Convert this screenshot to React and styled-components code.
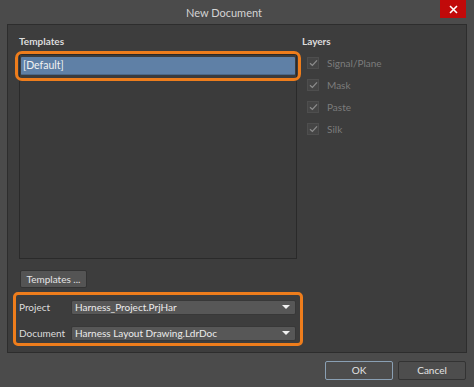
import React from "react";
import styled, { createGlobalStyle } from "styled-components";

const GlobalStyle = createGlobalStyle`
  html, body {
    margin: 0;
    padding: 0;
    background: #4b4b4b;
  }
  body {
    font-family: "Lato", "Noto Sans", sans-serif;
  }
`;

const layers = ["Signal/Plane", "Mask", "Paste", "Silk"];

const App = () => {
  return (
    <Dialog>
      <GlobalStyle />
      <TitleBar>
        <Title>New Document</Title>
        <CloseButton aria-label="Close">
          <svg width="9" height="9" viewBox="0 0 9 9">
            <path d="M1 1L8 8M8 1L1 8" stroke="#fff" strokeWidth="1.6" />
          </svg>
        </CloseButton>
      </TitleBar>

      <Panel>
        <LeftColumn>
          <SectionLabel>Templates</SectionLabel>
          <TemplateList>
            <ListItem $selected>[Default]</ListItem>
          </TemplateList>
          <PlainButton>Templates ...</PlainButton>
          <Highlight>
            <FieldRow>
              <FieldLabel>Project</FieldLabel>
              <Select>
                <span>Harness_Project.PrjHar</span>
                <Caret />
              </Select>
            </FieldRow>
            <FieldRow>
              <FieldLabel>Document</FieldLabel>
              <Select>
                <span>Harness Layout Drawing.LdrDoc</span>
                <Caret />
              </Select>
            </FieldRow>
          </Highlight>
        </LeftColumn>

        <RightColumn>
          <SectionLabel>Layers</SectionLabel>
          <LayerList>
            {layers.map((name) => (
              <LayerRow key={name}>
                <CheckBox>
                  <svg width="9" height="8" viewBox="0 0 9 8">
                    <path
                      d="M1 4.2L3.4 6.4L8 1.4"
                      fill="none"
                      stroke="#8c8c8c"
                      strokeWidth="1.3"
                    />
                  </svg>
                </CheckBox>
                <LayerName>{name}</LayerName>
              </LayerRow>
            ))}
          </LayerList>
        </RightColumn>
      </Panel>

      <Footer>
        <DialogButton $primary>OK</DialogButton>
        <DialogButton>Cancel</DialogButton>
      </Footer>
    </Dialog>
  );
};

export default App;

const Dialog = styled.div`
  width: 474px;
  height: 387px;
  background: #4b4b4b;
  display: flex;
  flex-direction: column;
  overflow: hidden;
`;

const TitleBar = styled.div`
  height: 24px;
  display: flex;
  align-items: flex-start;
  padding-left: 8px;
  padding-right: 8px;
`;

const Title = styled.div`
  flex: 1;
  text-align: center;
  color: #d4d4d4;
  font-size: 11px;
  line-height: 25px;
`;

const CloseButton = styled.div`
  width: 26px;
  height: 18px;
  background: #c10a0a;
  display: flex;
  align-items: center;
  justify-content: center;
`;

const Panel = styled.div`
  margin: 0 7px;
  height: 329px;
  box-sizing: border-box;
  border: 1px solid #2d2d2d;
  background: #3d3d3d;
  display: flex;
  padding: 10px 0 0 11px;
`;

const LeftColumn = styled.div`
  width: 278px;
  display: flex;
  flex-direction: column;
  align-items: flex-start;
`;

const RightColumn = styled.div`
  margin-left: 5px;
  display: flex;
  flex-direction: column;
`;

const SectionLabel = styled.div`
  color: #dcdcdc;
  font-size: 10px;
  font-weight: 700;
  height: 19px;
  line-height: 12px;
`;

const TemplateList = styled.div`
  width: 278px;
  height: 205px;
  box-sizing: border-box;
  border: 1px solid #2a2a2a;
  background: #3b3b3b;
  padding: 2px 1px;
`;

const ListItem = styled.div`
  height: 18px;
  box-sizing: border-box;
  padding-left: 2px;
  font-size: 10.5px;
  line-height: 17px;
  color: #f2f2f2;
  background: ${(p) => (p.$selected ? "#5f80a6" : "transparent")};
  border-bottom: 1px solid ${(p) => (p.$selected ? "#4d6887" : "transparent")};
  outline: ${(p) => (p.$selected ? "3px solid #ee7d1c" : "none")};
  outline-offset: 3px;
  border-radius: 1px;
`;

const PlainButton = styled.div`
  margin-top: 11px;
  margin-left: 1px;
  width: 67px;
  height: 18px;
  box-sizing: border-box;
  border: 1px solid #333;
  border-radius: 2px;
  background: #545454;
  color: #e4e4e4;
  font-size: 10px;
  line-height: 16px;
  text-align: center;
`;

const Highlight = styled.div`
  margin-top: 4px;
  margin-left: -6px;
  width: 290px;
  box-sizing: border-box;
  border: 3px solid #ee7d1c;
  border-radius: 5px;
  padding: 5px 4px 3px 3px;
  display: flex;
  flex-direction: column;
  gap: 12px;
`;

const FieldRow = styled.div`
  display: flex;
  align-items: center;
  height: 14px;
`;

const FieldLabel = styled.div`
  width: 52px;
  color: #dcdcdc;
  font-size: 10px;
`;

const Select = styled.div`
  flex: 1;
  height: 15px;
  box-sizing: border-box;
  border: 1px solid #383838;
  border-radius: 2px;
  background: #575757;
  display: flex;
  align-items: center;
  justify-content: space-between;
  padding: 0 5px 0 3px;
  color: #ececec;
  font-size: 10px;
`;

const Caret = styled.span`
  width: 0;
  height: 0;
  border-left: 4px solid transparent;
  border-right: 4px solid transparent;
  border-top: 4px solid #f0f0f0;
`;

const LayerList = styled.div`
  display: flex;
  flex-direction: column;
  gap: 10px;
  padding-top: 3px;
`;

const LayerRow = styled.div`
  display: flex;
  align-items: center;
  height: 12px;
`;

const CheckBox = styled.div`
  width: 12px;
  height: 12px;
  margin-left: 5px;
  box-sizing: border-box;
  border: 1px solid #4e4e4e;
  background: #454545;
  display: flex;
  align-items: center;
  justify-content: center;
`;

const LayerName = styled.div`
  margin-left: 8px;
  color: #7c7c7c;
  font-size: 10px;
`;

const Footer = styled.div`
  display: flex;
  justify-content: flex-end;
  gap: 5px;
  padding: 8px 8px 0 0;
`;

const DialogButton = styled.div`
  width: 68px;
  height: 19px;
  box-sizing: border-box;
  border: 1px solid ${(p) => (p.$primary ? "#8aa0b4" : "#333")};
  border-radius: 2px;
  background: #4d4d4d;
  color: #e4e4e4;
  font-size: 10px;
  line-height: 17px;
  text-align: center;
`;
